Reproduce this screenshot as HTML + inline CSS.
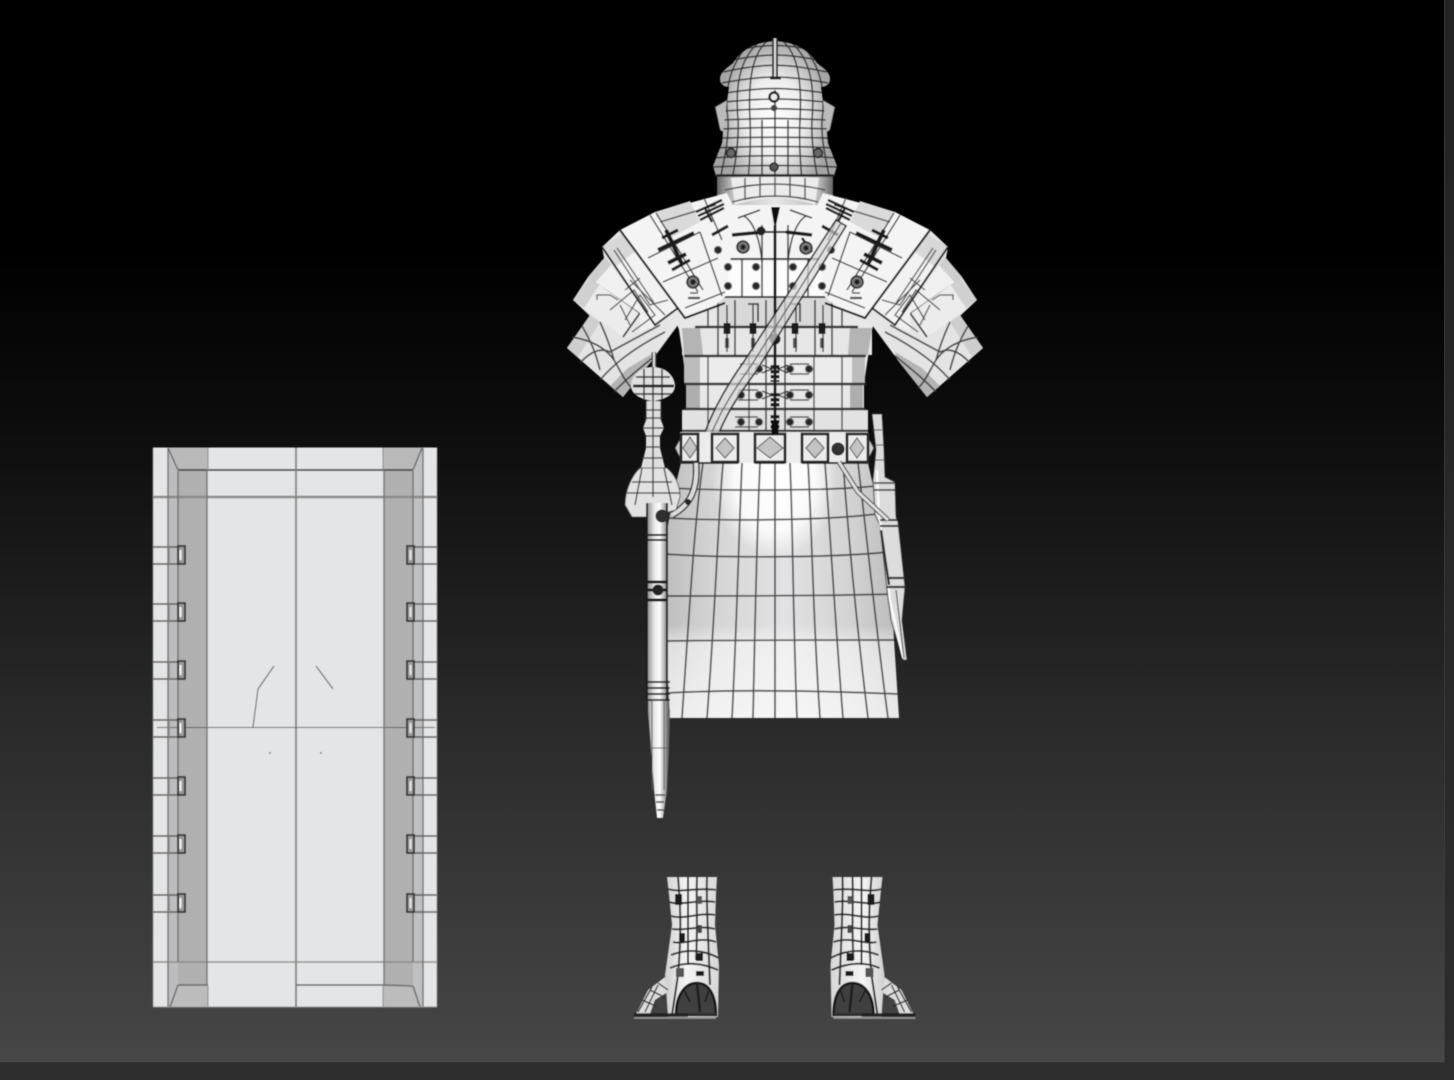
<!DOCTYPE html>
<html><head><meta charset="utf-8"><title>Roman soldier wireframe</title>
<style>html,body{margin:0;padding:0;width:1454px;height:1080px;overflow:hidden;background:#2d2d2d}svg{display:block}</style></head>
<body>
<svg width="1454" height="1080" viewBox="0 0 1454 1080" xmlns="http://www.w3.org/2000/svg">
<defs>
<filter id="soft" x="0" y="0" width="1454" height="1080" filterUnits="userSpaceOnUse"><feGaussianBlur stdDeviation=".5"/></filter>
<linearGradient id="bg" x1="0" y1="0" x2="0" y2="1080" gradientUnits="userSpaceOnUse">
<stop offset="0" stop-color="#000"/><stop offset=".23" stop-color="#000"/><stop offset=".4" stop-color="#0d0d0d"/><stop offset=".68" stop-color="#2b2b2b"/><stop offset="1" stop-color="#484848"/>
</linearGradient>
<linearGradient id="outer" x1="0" y1="0" x2="0" y2="1080" gradientUnits="userSpaceOnUse">
<stop offset="0" stop-color="#232323"/><stop offset="1" stop-color="#2d2d2d"/>
</linearGradient>
<radialGradient id="helm" gradientUnits="userSpaceOnUse" cx="775" cy="118" r="68" gradientTransform="translate(775 118) scale(.85 1.15) translate(-775 -118)">
<stop offset="0" stop-color="#fff"/><stop offset=".5" stop-color="#eee"/><stop offset="1" stop-color="#a4a4a4"/>
</radialGradient>
<linearGradient id="neck" x1="717" y1="0" x2="833" y2="0" gradientUnits="userSpaceOnUse">
<stop offset="0" stop-color="#666"/><stop offset=".12" stop-color="#bbb"/><stop offset=".5" stop-color="#e8e8e8"/><stop offset=".88" stop-color="#bbb"/><stop offset="1" stop-color="#666"/>
</linearGradient>
<linearGradient id="skirt" x1="670" y1="0" x2="900" y2="0" gradientUnits="userSpaceOnUse">
<stop offset="0" stop-color="#c0c0c0"/><stop offset=".2" stop-color="#d6d6d6"/><stop offset=".5" stop-color="#e2e2e4"/><stop offset=".8" stop-color="#d2d2d2"/><stop offset="1" stop-color="#b8b8b8"/>
</linearGradient>
<radialGradient id="skirtTop" gradientUnits="userSpaceOnUse" cx="775" cy="480" r="78" gradientTransform="translate(775 480) scale(.8 1) translate(-775 -480)">
<stop offset="0" stop-color="#fff"/><stop offset=".65" stop-color="#fff" stop-opacity=".85"/><stop offset="1" stop-color="#fff" stop-opacity="0"/>
</radialGradient>
<linearGradient id="skirtLow" x1="0" y1="625" x2="0" y2="718" gradientUnits="userSpaceOnUse">
<stop offset="0" stop-color="#fff" stop-opacity="0"/><stop offset=".2" stop-color="#fff" stop-opacity=".5"/><stop offset="1" stop-color="#fff" stop-opacity=".7"/>
</linearGradient>
<linearGradient id="blade" x1="647" y1="0" x2="668" y2="0" gradientUnits="userSpaceOnUse">
<stop offset="0" stop-color="#8a8a8a"/><stop offset=".35" stop-color="#e8e8e8"/><stop offset=".6" stop-color="#fff"/><stop offset=".85" stop-color="#aaa"/><stop offset="1" stop-color="#666"/>
</linearGradient>
<linearGradient id="boot" x1="665" y1="0" x2="720" y2="0" gradientUnits="userSpaceOnUse">
<stop offset="0" stop-color="#cfcfcf"/><stop offset=".4" stop-color="#f5f5f5"/><stop offset="1" stop-color="#d6d6d6"/>
</linearGradient>
<clipPath id="hc"><path d="M775 41C755 42 741 50 733 63C727 68 720 72 720 79C720 85 725 87 729 87L726 108L723 132L722 143L713 166L716 176H834L837 166L828 143L827 132L824 108L821 87C825 87 830 85 830 79C830 72 823 68 817 63C809 50 795 42 775 41Z"/></clipPath>
<clipPath id="sc"><path d="M681 463C674 490 666 530 665 555C664 600 667 660 670 718H899C896 670 892 610 889 560C884 530 874 490 868 463Z"/></clipPath>
<g id="clipL" fill="none" stroke="#3c3c3c" stroke-width="1.500">
<path d="M153 0H183M153 17H184" stroke="#5a5a5a"/>
<path d="M169 0V17" stroke="#888"/>
<path d="M178 -1H185V17H178Z" fill="#999" stroke="#2e2e2e" stroke-width="1.800"/>
<path d="M180.500 3V13" stroke="#f4f4f4" stroke-width="2"/>
</g>
<g id="clipR" fill="none" stroke="#3c3c3c" stroke-width="1.500">
<path d="M407 0H437M407 17H437" stroke="#5a5a5a"/>
<path d="M407 -1H414V17H407Z" fill="#999" stroke="#2e2e2e" stroke-width="1.800"/>
<path d="M410.500 3V13" stroke="#e8e8e8" stroke-width="2"/>
</g>
<g id="rosette"><circle r="6" fill="#777" stroke="#222" stroke-width="1.600"/><circle r="2.600" fill="#1c1c1c"/></g>
<g id="riv"><circle r="3.600" fill="#262626" stroke="#666"/></g>

<g id="halfBody">
<!-- base silhouette -->
<path d="M727 193L620 230L602 247L604 258L588 277L573 300L590 316L567 348L623 397L650 363L678 325L720 300Z" fill="#e6e6e6"/>
<!-- sleeve -->
<path d="M567 348L590 315L623 337L670 322L650 363L623 397Z" fill="#e4e4e4"/>
<path d="M623 397L610 386L628 368L655 352L650 363Z" fill="#b4b4b4"/>
<path d="M590 315L567 348L578 357L600 322Z" fill="#cecece"/>
<g fill="none" stroke="#303030" stroke-width="1.700" opacity=".85">
<path d="M572 337C590 340 605 347 614 360C620 370 625 382 632 388"/>
<path d="M582 326C590 340 595 350 600 370"/>
<path d="M600 322C606 335 610 345 614 360"/>
<path d="M580 363C590 352 600 347 610 352L660 325"/>
<path d="M600 380C612 366 630 350 665 332"/>
<path d="M614 392C625 380 640 368 656 355"/>
</g>
<!-- plate D -->
<path d="M573 300L590 277L640 313L623 337Z" fill="#ececec"/>
<path d="M573 300L590 277L600 284L584 308Z" fill="#d0d0d0"/>
<path d="M590 277L640 313L623 337" fill="none" stroke="#2a2a2a" stroke-width="1.700"/>
<!-- plate C -->
<path d="M588 277L605 257L655 325L640 332L640 313Z" fill="#f0f0f0"/>
<path d="M588 277L605 257L611 265L594 284Z" fill="#cecece"/>
<!-- plate B -->
<path d="M602 247L623 233L678 308L655 325Z" fill="#f2f2f2"/>
<path d="M602 247L623 233L636 251L616 266Z" fill="#d8d8d8"/>
<path d="M602 247L655 325L678 308" fill="none" stroke="#161616" stroke-width="2"/>
<g fill="none" stroke="#3a3a3a" stroke-width="1.300" opacity=".85">
<path d="M614 250L650 305L668 300"/><path d="M617 248L654 303"/><path d="M597 300V295H610L618 300"/><path d="M610 310L634 290L648 312"/><path d="M625 320L640 295L655 315L632 332"/><path d="M630 280L665 315"/><path d="M620 305L630 325"/><path d="M640 278L625 290"/>
</g>
<!-- plate A -->
<path d="M620 230L655 212L727 193L737 215L725 297L710 310L685 318Z" fill="#f4f4f4"/>
<path d="M655 212L690 201L700 222L670 238Z" fill="#dadada"/>
<path d="M620 230L685 318L725 303" fill="none" stroke="#141414" stroke-width="2.100"/>
<g fill="none" stroke="#333" stroke-width="1.400" opacity=".9">
<path d="M650 215L698 292"/><path d="M656 213L703 290"/><path d="M660 222L716 205"/><path d="M648 258L700 232"/><path d="M663 282L718 258"/><path d="M685 308L725 292"/><path d="M688 298H700" stroke-width="2.200"/><path d="M690 293H698"/><path d="M700 232L722 296"/><path d="M704 198L722 240"/>
</g>
<!-- shoulder buckle -->
<g fill="none" stroke="#1a1a1a">
<path d="M658 250L694 233" stroke-width="3.800"/><path d="M666 230L682 264" stroke-width="4"/><path d="M668 263L686 254" stroke-width="4"/><path d="M662 238L678 230M672 270L690 260" stroke-width="3.200"/>
<path d="M696 212L722 200M700 220L724 208M698 216L724 204M705 208L712 222" stroke-width="2.500"/><path d="M712 235L728 226" stroke-width="3.200"/>
</g>
<use href="#rosette" x="693" y="282"/>
</g>
</defs>

<rect width="1454" height="1080" fill="url(#outer)"/>
<rect width="1444" height="1062" fill="url(#bg)"/>
<path d="M1444.500 0V1062H0" fill="none" stroke="#555" stroke-opacity=".35"/>

<g filter="url(#soft)">
<!-- SHIELD -->
<g>
<rect x="153" y="447.500" width="284" height="559.500" fill="#e4e5e6"/>
<rect x="168" y="447.500" width="10" height="559.500" fill="#bdbdbd"/>
<rect x="413" y="447.500" width="10" height="559.500" fill="#c0c0c0"/>
<rect x="178" y="470" width="29" height="515" fill="#b0b0b0"/>
<rect x="384" y="470" width="29" height="515" fill="#b0b0b0"/>
<path d="M168 447.500H208V470H178Z" fill="#b9b9b9"/>
<path d="M383 447.500H422L413 470H383Z" fill="#b9b9b9"/>
<path d="M178 985H208V1007H170Z" fill="#bcbcbc"/>
<path d="M383 984L413 986L420 1007H383Z" fill="#bcbcbc"/>
<path d="M153 497H437" stroke="#8a8a8a" stroke-width="2.400"/>
<path d="M153 962H437" stroke="#8d8d8d" stroke-width="1.400"/>
<path d="M178 470H413" stroke="#444" stroke-width="1.800"/>
<path d="M296 447.500V1007" stroke="#808080" stroke-width="1.800"/>
<path d="M157 727.500H435" stroke="#5a5a5a" stroke-width="1"/>
<path d="M178 471V962M207 470V985M384 470V985M413 471V962M168 448V1007M423 448V1007" fill="none" stroke="#717171" stroke-width="1.400"/>
<path d="M178 985L208 985M296 985H383L413 986M168 448L178 470M422 448L413 470M178 985L170 1007M413 986L420 1007" fill="none" stroke="#666" stroke-width="1.400"/>
<path d="M208 447.500V470M383 447.500V470M208 985V1007M383 985V1007" stroke="#888" stroke-width="1"/>
<path d="M153 447.500V1007M437 447.500V1007" stroke="#888" stroke-width="1"/>
<path d="M153 1007H437" stroke="#999"/>
<path d="M274 666L258 689L253 727M316 666L333 689" fill="none" stroke="#666" stroke-width="1.100"/>
<circle cx="270" cy="753" r="1" fill="#777"/><circle cx="321" cy="753" r="1" fill="#777"/>
<use href="#clipL" y="547"/><use href="#clipL" y="604"/><use href="#clipL" y="662"/><use href="#clipL" y="720"/><use href="#clipL" y="778"/><use href="#clipL" y="836"/><use href="#clipL" y="895"/>
<use href="#clipR" y="547"/><use href="#clipR" y="604"/><use href="#clipR" y="662"/><use href="#clipR" y="720"/><use href="#clipR" y="778"/><use href="#clipR" y="836"/><use href="#clipR" y="895"/>
</g>

<!-- NECK + TORSO -->
<path d="M717 176H833V198L822 215H728L717 198Z" fill="url(#neck)"/>
<path d="M731 178C760 176 790 176 819 178L815 205C790 196 760 196 735 205Z" fill="#ececec"/>
<g fill="none" stroke="#333" stroke-width="1.400" opacity=".85"><path d="M725 190C760 182 790 182 825 190M732 202C760 194 790 194 818 202M745 178V200M760 177V197M775 177V197M790 177V197M805 178V200"/></g>
<path d="M675 318L727 205H823L875 318L872 330L868 357L864 384L864 408L868 432H682L686 408L686 384L683 357L679 330Z" fill="#e8e8e8"/>
<path d="M718 298H832V328H718Z" fill="#d8d8d8"/>
<path d="M682 328H872V355H682Z" fill="#e6e6e6"/>
<path d="M682 328L700 328L703 355H684ZM872 328H850L848 355H868Z" fill="#b4b4b4"/>
<path d="M684 357H865V383H684Z" fill="#ececec"/>
<path d="M684 357H700V383H684ZM852 357H865V383H852Z" fill="#bcbcbc"/>
<path d="M686 385H863V408H686Z" fill="#e8e8e8"/>
<path d="M686 385H700V408H686ZM850 385H863V408H850Z" fill="#aeaeae"/>
<path d="M682 410H868V432H682Z" fill="#e2e2e2"/>
<path d="M727 205H823L828 297H722Z" fill="#f4f4f4"/>
<path d="M723 262H823V297H723Z" fill="#fcfcfc"/>
<g fill="none" stroke="#222" stroke-width="1.500" opacity=".9">
<path d="M706 297H845M722 259H828" stroke-width="1.900"/>
<path d="M695 327H858M684 356H866M684 384H867M684 409H866M682 431H868" stroke-width="2.500"/>
<path d="M722 262V297M742 260V298M762 225V298M788 225V298M808 260V298M828 262V297"/>
<path d="M708 300V328M718 300V355M735 300V355M766 300V432M785 300V432M815 300V355M832 300V355M842 300V328"/>
<path d="M708 357V432M749 357V432M814 357V432M842 357V432" stroke-width="1.300"/>
<path d="M744 216C754 222 760 240 762 262M806 216C796 222 790 240 788 262"/>
<path d="M738 218L760 210M812 218L790 210"/>
</g>
<path d="M771 207H780L775 230Z" fill="#111"/>
<path d="M775 225V440" stroke="#1a1a1a" stroke-width="3"/>
<!-- half bodies -->
<use href="#halfBody"/>
<use href="#halfBody" transform="translate(1550 0) scale(-1 1)"/>

<!-- upper back hardware -->
<g fill="none" stroke="#1a1a1a">
<path d="M732 235L764 232M786 232L812 235" stroke-width="3.600"/><path d="M764 232H786" stroke-width="2"/><path d="M802 238L812 252" stroke-width="2.500"/>
</g>
<circle cx="761" cy="231" r="4.500" fill="#222"/>
<use href="#rosette" x="743" y="247"/><use href="#rosette" x="806" y="248"/>
<g><use href="#riv" x="718" y="250"/><use href="#riv" x="831" y="250"/><use href="#riv" x="728" y="267"/><use href="#riv" x="756" y="267"/><use href="#riv" x="728" y="286"/><use href="#riv" x="756" y="286"/><use href="#riv" x="793" y="267"/><use href="#riv" x="822" y="267"/><use href="#riv" x="793" y="286"/><use href="#riv" x="822" y="286"/></g>
<!-- buckles lower -->
<g stroke="#1d1d1d" fill="none">
<path d="M727 305V352M753 305V352M796 305V352M823 305V352" stroke-width="1.300"/>
<path d="M748 304H758V322M791 304H800V322" stroke-width="1.500"/>
<path d="M727 323V334M753 323V334M795 323V334M822 323V334" stroke-width="7"/>
<path d="M727 338V348M753 338V348M795 338V348M822 338V348" stroke-width="4" opacity=".7"/>
<path d="M775 330V352" stroke-width="3"/><path d="M775 365V382M775 393V409M775 415V435" stroke-width="9" stroke-dasharray="3.500 1.500"/>
</g>
<circle cx="775" cy="339" r="5.500" fill="#1c1c1c"/>
<g fill="none" stroke="#2c2c2c" stroke-width="1.300"><path d="M740 364H758M740 374H758M762 365L772 369L762 373M788 365L778 369L788 373M790 364H809M790 374H809M738 390H758M738 400H758M762 391L772 395L762 399M788 391L778 395L788 399M790 390H809M790 400H809M735 417H758M735 427H758M790 417H809M790 427H809"/></g>
<g><use href="#riv" x="759" y="369"/><use href="#riv" x="790" y="369"/><use href="#riv" x="809" y="369"/><use href="#riv" x="741" y="395"/><use href="#riv" x="759" y="395"/><use href="#riv" x="790" y="395"/><use href="#riv" x="809" y="395"/><use href="#riv" x="741" y="422"/><use href="#riv" x="759" y="422"/><use href="#riv" x="790" y="422"/><use href="#riv" x="809" y="422"/></g>

<!-- diagonal strap -->
<path d="M836 220L846 226L757 370C735 400 722 420 712 452H698C708 420 722 392 745 360Z" fill="#d8d8d8" fill-opacity=".7" stroke="#222" stroke-width="1.600"/>
<path d="M841 223L751 366C729 396 713 424 705 452" fill="none" stroke="#555" stroke-width="1.200"/>

<!-- HELMET -->
<path d="M727 100L715 107L720 130L728 135ZM823 100L835 107L830 130L822 135Z" fill="#bbb" stroke="#333"/>
<path d="M775 41C755 42 741 50 733 63C727 68 720 72 720 79C720 85 725 87 729 87L726 108L723 132L722 143L713 166L716 176H834L837 166L828 143L827 132L824 108L821 87C825 87 830 85 830 79C830 72 823 68 817 63C809 50 795 42 775 41Z" fill="url(#helm)"/>
<g clip-path="url(#hc)" fill="none" stroke="#262626" stroke-width="1.500" opacity=".92">
<path d="M738 50C765 44 785 44 812 50M728 61C765 53 785 53 822 61M723 72C765 63 785 63 827 72M722 83C765 75 785 75 828 83M725 93C765 87 785 87 825 93M725 102C765 98 785 98 825 102M725 111C765 108 785 108 825 111M724 120C765 118 785 118 826 120M722 129C765 127 785 127 828 129M722 138C765 137 785 137 828 138M715 148C750 146 800 146 835 148M713 158C750 155 800 155 837 158M712 167C750 165 800 165 838 167"/>
<path d="M767 41C752 55 748 80 750 120C751 140 750 160 748 180M783 41C798 55 802 80 800 120C799 140 800 160 802 180"/>
<path d="M757 44C740 60 735 85 738 120C739 140 736 160 732 180M793 44C810 60 815 85 812 120C811 140 814 160 818 180"/>
<path d="M742 52C730 70 724 90 728 120C729 140 724 160 720 180M808 52C820 70 826 90 822 120C821 140 826 160 830 180"/>
<path d="M762 120V180M775 90V180M788 120V180"/>
</g>
<path d="M775 38V78" stroke="#333" stroke-width="6"/><path d="M775 38V78" stroke="#ddd" stroke-width="2"/>
<path d="M770 78H781" stroke="#222" stroke-width="3"/>
<circle cx="774" cy="97" r="4.500" fill="#eee" stroke="#1c1c1c" stroke-width="2.400"/>
<circle cx="774" cy="108" r="3.200" fill="#444"/>
<circle cx="731" cy="153" r="4.500" fill="#666" stroke="#222" stroke-width="1.600"/>
<circle cx="818" cy="153" r="4.500" fill="#666" stroke="#222" stroke-width="1.600"/>
<circle cx="774" cy="167" r="4" fill="#555" stroke="#222" stroke-width="1.600"/>
<path d="M716 175.500H834" stroke="#222" stroke-width="2.400"/>

<!-- SKIRT -->
<path d="M681 463C674 490 666 530 665 555C664 600 667 660 670 718H899C896 670 892 610 889 560C884 530 874 490 868 463Z" fill="url(#skirt)"/>
<path d="M682 463H868V560H682Z" fill="url(#skirtTop)" clip-path="url(#sc)"/>
<rect x="660" y="625" width="245" height="95" fill="url(#skirtLow)" clip-path="url(#sc)"/>
<g clip-path="url(#sc)" fill="none" stroke="#353535" stroke-width="1.700" opacity=".85">
<path d="M672 488C720 491 830 491 876 486M667 518C720 521 830 521 884 513M665 554C720 558 830 558 889 552M665 596C720 596 830 596 892 594M668 641C720 640 830 640 896 640M668 693C720 690 800 690 898 694"/>
<path d="M703 463C695 520 692 570 682 718"/>
<path d="M723 463C718 520 716 600 707 718"/>
<path d="M742 463C739 530 737 620 732 718"/>
<path d="M760 463C757 530 755 620 753 718"/>
<path d="M775 463V718"/>
<path d="M790 463C793 530 793 620 797 718"/>
<path d="M808 463C812 530 813 620 820 718"/>
<path d="M825 463C830 530 835 620 843 718"/>
<path d="M843 463C848 530 856 620 868 718"/>
<path d="M858 463C866 530 875 620 888 718"/>
</g>

<!-- BELT -->
<path d="M680 432H868V463H680Z" fill="#ececec"/>
<path d="M675 448L681 437V460ZM874 448L868 437V460Z" fill="#ccc" stroke="#333"/>
<g fill="none" stroke="#262626" stroke-width="2.800">
<path d="M681 434H698V462H681ZM712 434H738V462H712ZM755 434H785V462H755ZM802 434H828V462H802ZM847 434H868V462H847Z"/>
<path d="M680 463H738M755 463H785M802 463H868" stroke-width="2"/>
</g>
<g fill="#c4c4c4" stroke="#444" stroke-width="1">
<path d="M690 437L697 448L690 458L683 448Z"/><path d="M725 438L734 448L725 458L716 448Z"/><path d="M770 437L783 448L770 458L757 448Z"/><path d="M815 438L824 448L815 458L806 448Z"/><path d="M857 438L864 448L857 458L850 448Z"/>
</g>
<circle cx="838" cy="449" r="6" fill="#333" stroke="#111"/>
<path d="M775 420V435" stroke="#111" stroke-width="7"/>

<!-- SCABBARD right -->
<path d="M872 414H882L884 450L885 477L895 482L896 517L898 522L905 587L902 620L907 660H903L891 620L887 590L880 525L875 515L873 480L876 450Z" fill="#dcdcdc" stroke="#3a3a3a" stroke-width="1"/>
<path d="M877 470L879 515L886 560L890 600L903 658" fill="none" stroke="#fff" stroke-width="2"/>
<g fill="none" stroke="#2e2e2e"><path d="M872 430H882M873 445H884M875 460H884"/><path d="M874 483H895M874 490H895" stroke-width="1.600"/><path d="M880 520H897M880 526H898" stroke-width="2"/><path d="M881 530L889 585" stroke-width="2.400"/><path d="M887 578H905M887 587H905" stroke-width="2.200"/><path d="M896 590L904 658"/></g>

<!-- straps -->
<path d="M696 463C698 490 690 505 672 515" fill="none" stroke="#333" stroke-width="7"/>
<path d="M696 463C698 490 690 505 672 515" fill="none" stroke="#ddd" stroke-width="4"/>
<circle cx="688" cy="502" r="3" fill="#222"/>
<path d="M839 462L858 492L888 520" fill="none" stroke="#333" stroke-width="5"/>
<path d="M839 462L858 492L888 520" fill="none" stroke="#ddd" stroke-width="3"/>

<!-- SWORD -->
<path d="M654 352V373" stroke="#444" stroke-width="5"/><path d="M654 352V373" stroke="#ddd" stroke-width="2"/>
<path d="M653 367C668 367 675 378 675 386C675 394 665 400 653 401C641 400 631 394 631 386C631 378 638 367 653 367Z" fill="#e0e0e0"/>
<g fill="none" stroke="#262626" stroke-width="1.400"><path d="M633 386H674" stroke-width="2.800"/><path d="M636 377H670M634 394H672M644 369V400M653 367V401M662 369V400"/></g>
<path d="M646 401H661V420L664 428L660 436V448L665 468H641L646 448V436L643 428L646 420Z" fill="#dedede"/>
<g fill="none" stroke="#2e2e2e" stroke-width="1.300"><path d="M646 401V420M661 401V420M645 410H662M644 418H663M643 428H664M646 436H660M645 447H661M642 458H664M653 401V468"/></g>
<path d="M640 468H667C675 475 680 485 680 497L676 510L650 517H632L625 505C625 490 632 475 640 468Z" fill="#e2e2e2" stroke="#555"/>
<g fill="none" stroke="#333" stroke-width="1.300"><path d="M627 493H680M632 482H672M642 468L635 505M653 468V497M664 468L672 505"/></g>
<path d="M647 503H668V690L670 712L669 750L667 790L663 818H657L654 790L651 750L648 712Z" fill="url(#blade)"/>
<g fill="none" stroke="#1e1e1e"><path d="M647 503V700M667 503V700" stroke-width="2"/><path d="M645 535H668M645 540H668" stroke-width="2"/><path d="M645 582H668M645 590H668M645 600H668" stroke-width="3"/><path d="M646 682H670M646 688H670M646 694H670M646 700H670" stroke-width="1.700"/><path d="M652 700V790M664 700V790" stroke="#555"/><path d="M650 748H668" stroke="#555"/><path d="M655 795H665M656 802H664M657 810H664" stroke="#444" stroke-width="1.500"/></g>
<circle cx="662" cy="516" r="6.500" fill="#2e2e2e"/>
<circle cx="658" cy="590" r="5.500" fill="#222"/>

<!-- BOOTS -->
<g id="bootL">
<path d="M665 977L648 990L636 1014L650 1014L655 1000L668 992Z" fill="#dcdcdc"/>
<path d="M667 877H717L716 895L715 925L719 965L718 1017H668L665 975L672 925L669 895Z" fill="url(#boot)"/>
<path d="M676 1015C676 995 685 983 697 983C709 983 716 995 716 1015Z" fill="#3f3f3f" stroke="#141414" stroke-width="2.600"/>
<path d="M697 983L700 1012" stroke="#1c1c1c" stroke-width="2.400"/><path d="M684 990L690 1002M709 990L705 1002" stroke="#1c1c1c" stroke-width="1.500"/>
<path d="M634 1015H688" stroke="#202020" stroke-width="3.500"/><path d="M634 1018H716" stroke="#999" stroke-width="1.700"/><path d="M688 1014H716" stroke="#333" stroke-width="2"/>
<g fill="none" stroke="#262626" stroke-width="1.900">
<path d="M668 889C680 893 700 887 716 890M669 902C680 906 700 899 715 902M671 916C684 920 700 912 715 915M672 929C684 931 700 925 715 929M673 942C684 945 700 936 716 942M671 955C684 950 700 948 719 958M670 968C684 962 700 962 718 970"/>
<path d="M678 877C680 900 682 930 678 975L672 1015M688 877V965M697 877C696 900 698 930 696 960M707 877C706 900 708 930 710 985"/>
<path d="M642 1000L656 1006M650 990L664 997M658 983L668 990M645 1012L658 985M638 1012L652 987" stroke-width="1.300"/>
</g>
<g fill="#1c1c1c"><rect x="675" y="894" width="7" height="11"/><rect x="697" y="896" width="5" height="8" fill="#555"/><rect x="698" y="925" width="4" height="8" fill="#444"/><rect x="679" y="933" width="6" height="9"/><rect x="696" y="953" width="7" height="8"/><rect x="676" y="968" width="8" height="9" fill="#555"/><rect x="696" y="971" width="8" height="5"/></g>
</g>
<use href="#bootL" transform="translate(1549.500 0) scale(-1 1)"/>
</g>
</svg>
</body></html>
